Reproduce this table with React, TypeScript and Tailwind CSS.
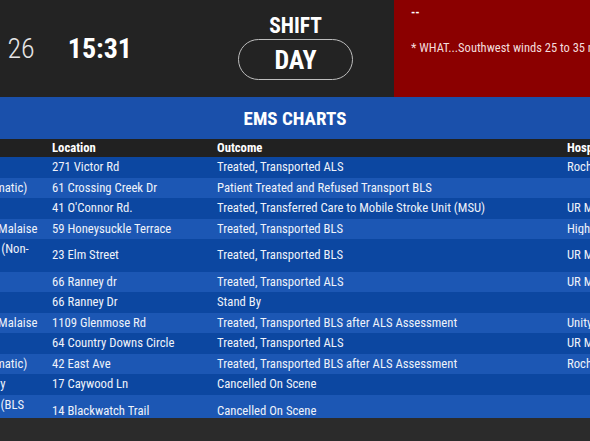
const rows: { nature: string; loc: string; out: string; hosp: string }[] = [
  { nature: "Breathing Problems", loc: "271 Victor Rd", out: "Treated, Transported ALS", hosp: "Rochester General Hospital" },
  { nature: "Chest Pain (Non-Traumatic)", loc: "61 Crossing Creek Dr", out: "Patient Treated and Refused Transport BLS", hosp: "" },
  { nature: "Stroke/CVA", loc: "41 O'Connor Rd.", out: "Treated, Transferred Care to Mobile Stroke Unit (MSU)", hosp: "UR Medicine Strong" },
  { nature: "Sick Person - General Malaise", loc: "59 Honeysuckle Terrace", out: "Treated, Transported BLS", hosp: "Highland Hospital" },
  { nature: "Unconscious/Fainting (Non-Traumatic)", loc: "23 Elm Street", out: "Treated, Transported BLS", hosp: "UR Medicine Strong" },
  { nature: "Cardiac Arrest", loc: "66 Ranney dr", out: "Treated, Transported ALS", hosp: "UR Medicine Strong" },
  { nature: "Standby", loc: "66 Ranney Dr", out: "Stand By", hosp: "" },
  { nature: "Sick Person - General Malaise", loc: "1109 Glenmose Rd", out: "Treated, Transported BLS after ALS Assessment", hosp: "Unity Hospital" },
  { nature: "Seizures", loc: "64 Country Downs Circle", out: "Treated, Transported ALS", hosp: "UR Medicine Strong" },
  { nature: "Chest Pain (Non-Traumatic)", loc: "42 East Ave", out: "Treated, Transported BLS after ALS Assessment", hosp: "Rochester General Hospital" },
  { nature: "Invalid Assist/No Injury", loc: "17 Caywood Ln", out: "Cancelled On Scene", hosp: "" },
  { nature: "Transfers/Interfacility (BLS Only)", loc: "14 Blackwatch Trail", out: "Cancelled On Scene", hosp: "" },
];

const font = { fontFamily: '"Roboto Condensed", Roboto, "Liberation Sans", sans-serif' };

export default function App() {
  return (
    <div className="h-[441px] w-[590px] overflow-hidden bg-[#2b2b2b] text-white" style={font}>
      <div className="ml-[-116px] w-[822px]">
        {/* Header */}
        <div className="flex h-[97px] bg-[#232323]">
          <div className="flex w-[313px] items-center justify-end gap-[33px] pr-[65px]">
            <div className="flex gap-[14px] text-[28px] font-light leading-none text-[#e6e6e6]">
              <span>Tue, Mar</span>
              <span>26</span>
            </div>
            <div className="text-[28px] font-bold leading-none">15:31</div>
          </div>
          <div className="flex w-[197px] flex-col items-center pt-[13.5px]">
            <div className="text-[21.5px] font-bold leading-[24px]">SHIFT</div>
            <div className="mt-[1.5px] flex h-[41px] w-[115px] items-center justify-center rounded-full border border-[#bdbdbd]">
              <span className="text-[26px] font-bold leading-none">DAY</span>
            </div>
          </div>
          <div className="w-[312px] overflow-hidden bg-[#8b0000] pl-[17px] pt-[6px]">
            <div className="text-[12px] font-bold leading-[14px]">--</div>
            <div className="mt-[20px] whitespace-nowrap text-[12.5px] leading-[16px] text-[#f4dcdc]">
              * WHAT...Southwest winds 25 to 35 mph with gusts up to 60 mph expected.
            </div>
          </div>
        </div>

        {/* Title */}
        <div className="flex h-[42px] items-center justify-center bg-[#1a50ab]">
          <span className="text-[19px] font-bold leading-none">EMS CHARTS</span>
        </div>

        {/* Table */}
        <div className="h-[279px] overflow-hidden">
          <div className="grid h-[18px] grid-cols-[163px_165px_350px_144px] items-center bg-[#212121] text-[12.7px] font-bold leading-none">
            <div className="px-[5px]">Nature</div>
            <div className="px-[5px]">Location</div>
            <div className="px-[5px]">Outcome</div>
            <div className="whitespace-nowrap px-[5px]">Hospital</div>
          </div>
          {rows.map((r, i) => (
            <div
              key={i}
              className={
                "grid grid-cols-[163px_165px_350px_144px] items-center py-[4.25px] text-[12.7px] leading-[12px] text-[#eef2fa] " +
                (i % 2 === 0 ? "bg-[#0c47a1]" : "bg-[#1c57b4]")
              }
            >
              <div className="px-[5px]">{r.nature}</div>
              <div className="px-[5px]">{r.loc}</div>
              <div className="px-[5px]">{r.out}</div>
              <div className="overflow-hidden whitespace-nowrap px-[5px]">{r.hosp}</div>
            </div>
          ))}
        </div>
      </div>
    </div>
  );
}
